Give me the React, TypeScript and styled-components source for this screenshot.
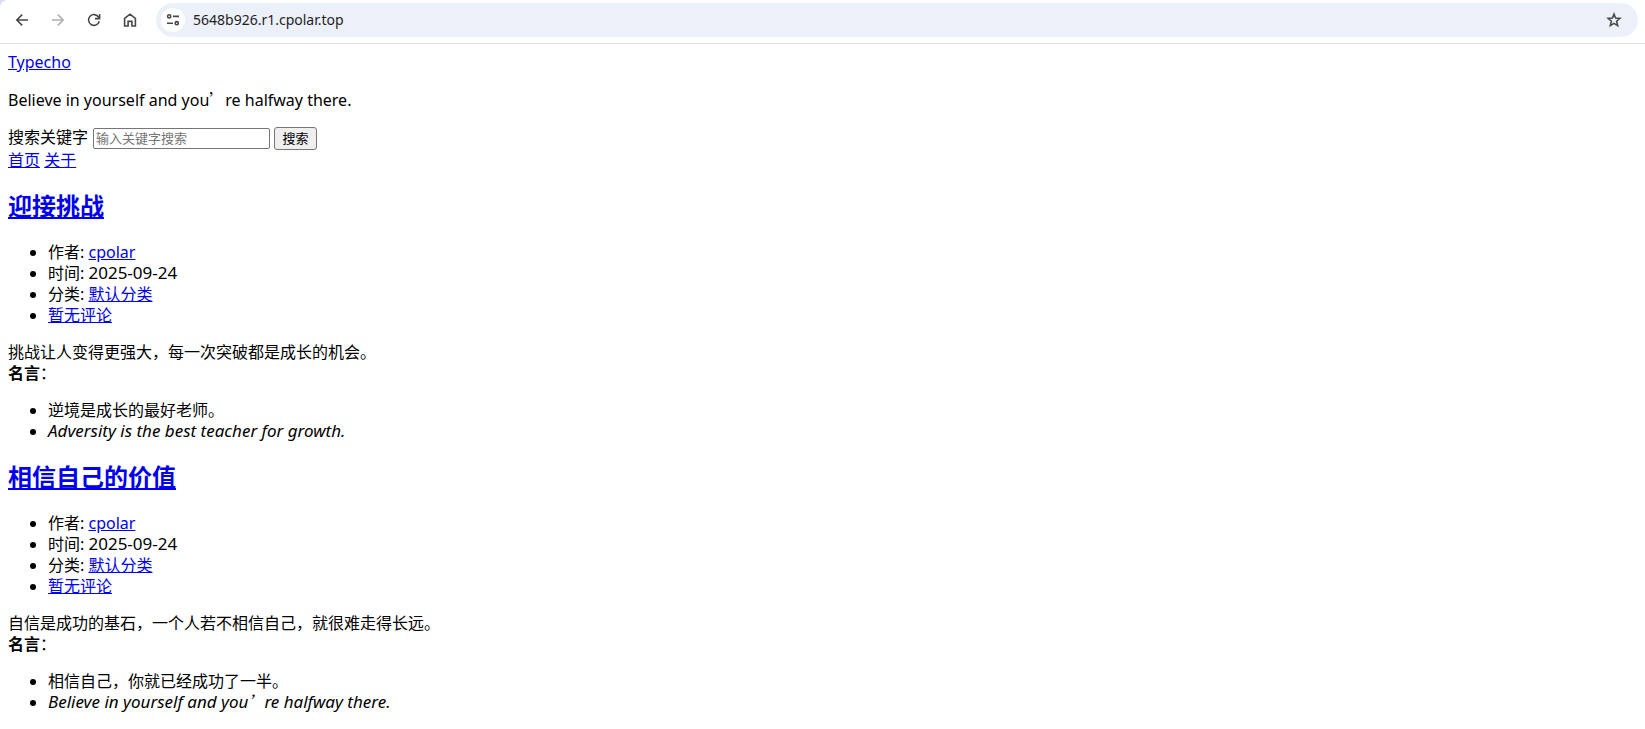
import React from "react";
import styled, { createGlobalStyle } from "styled-components";

const GlobalStyle = createGlobalStyle`
  body {
    margin: 0;
    background: #fff;
    color: #000;
    font: 16px/21px "Noto Sans", "Noto Sans CJK SC", sans-serif;
  }
`;

const Frame = styled.div`
  background: #d5dff0;
`;

const Toolbar = styled.header`
  display: flex;
  align-items: center;
  gap: 8px;
  padding: 3px 7px 6px 8px;
  border-bottom: 1px solid #dfe1e3;
  border-top-left-radius: 8px;
  background: #fff;
`;

const IconButton = styled.button`
  display: flex;
  align-items: center;
  justify-content: center;
  width: 28px;
  height: 28px;
  padding: 0;
  border: 0;
  border-radius: 50%;
  background: none;
  color: #474747;

  &:disabled {
    color: #b0b0b0;
  }
`;

const AddressBar = styled.div`
  display: flex;
  flex: 1;
  align-items: center;
  box-sizing: border-box;
  height: 34px;
  margin-left: 4px;
  padding: 0 10px 0 5px;
  border-radius: 17px;
  background: #ecf0f9;
`;

const SiteInfo = styled(IconButton)`
  width: 24px;
  height: 24px;
  background: #fff;
`;

const Address = styled.input`
  flex: 1;
  min-width: 0;
  padding: 0 8px;
  border: 0;
  outline: 0;
  background: none;
  color: #1f1f1f;
  font: 14px/20px "Noto Sans", sans-serif;
`;

const Page = styled.div`
  padding: 8px;
`;

const Link = styled.a`
  color: #0000ee;
  text-decoration: underline;
`;

const Paragraph = styled.p`
  margin: 16px 0;
`;

const SearchForm = styled.form`
  display: flex;
  align-items: center;
  height: 23px;
`;

const SearchLabel = styled.label`
  line-height: 21px;
  padding-bottom: 2px;
`;

const SearchInput = styled.input`
  box-sizing: border-box;
  width: 177px;
  height: 21px;
  margin: 0 4px 0 5px;
  padding: 0 2px 2px;
  border: 1px solid #767676;
  border-radius: 2px;
  font: 13px/17px "Noto Sans", "Noto Sans CJK SC", sans-serif;

  &::placeholder {
    color: #757575;
  }
`;

const SearchButton = styled.button`
  box-sizing: border-box;
  min-width: 43px;
  height: 23px;
  padding: 0 7px;
  border: 1px solid #767676;
  border-radius: 3px;
  background: #efefef;
  color: #000;
  font: 13px/17px "Noto Sans", "Noto Sans CJK SC", sans-serif;
`;

const Title = styled.h2`
  margin: 19px 0 21px;
  font-size: 24px;
  line-height: 31px;
`;

const List = styled.ul`
  margin: 16px 0;
  padding-left: 40px;
`;

const PostDate = styled.time`
  font-size: 17px;
  line-height: 17px;
`;

const Emphasis = styled.em`
  font-size: 17px;
  line-height: 17px;
`;

const FullWidth = styled.span`
  font-family: "Noto Sans CJK SC", sans-serif;
  font-size: 16px;
`;

const Motto = () => (
  <>
    Believe in yourself and you<FullWidth>’</FullWidth>re halfway there.
  </>
);

interface PostProps {
  title: string;
  body: string;
  saying: string;
  translation: React.ReactNode;
}

const Post = ({ title, body, saying, translation }: PostProps) => (
  <article>
    <Title>
      <Link href="#">{title}</Link>
    </Title>
    <List>
      <li>
        作者: <Link href="#">cpolar</Link>
      </li>
      <li>
        时间: <PostDate dateTime="2025-09-24">2025-09-24</PostDate>
      </li>
      <li>
        分类: <Link href="#">默认分类</Link>
      </li>
      <li>
        <Link href="#">暂无评论</Link>
      </li>
    </List>
    <Paragraph>
      {body}
      <br />
      <strong>名言</strong>：
    </Paragraph>
    <List>
      <li>{saying}</li>
      <li>
        <Emphasis>{translation}</Emphasis>
      </li>
    </List>
  </article>
);

const Icon = ({ children }: { children: React.ReactNode }) => (
  <svg width="16" height="16" viewBox="0 0 16 16" fill="none" stroke="currentColor" strokeWidth="1.6">
    {children}
  </svg>
);

export default function App() {
  return (
    <div lang="zh-CN">
      <GlobalStyle />
      <Frame>
        <Toolbar>
          <IconButton aria-label="后退">
            <Icon>
              <path d="M14 8H3M8.2 2.6 2.8 8l5.4 5.4" />
            </Icon>
          </IconButton>
          <IconButton aria-label="前进" disabled>
            <Icon>
              <path d="M2 8h11M7.8 2.6 13.2 8l-5.4 5.4" />
            </Icon>
          </IconButton>
          <IconButton aria-label="重新加载">
            <Icon>
              <path d="M13.2 9.2A5.4 5.4 0 1 1 12.6 5.2L13.4 6.3M13.6 2v4.6H9" />
            </Icon>
          </IconButton>
          <IconButton aria-label="主页">
            <Icon>
              <path d="M2.6 6.4 8 2.2l5.4 4.2V14H9.9V9.4H6.1V14H2.6z" />
            </Icon>
          </IconButton>
          <AddressBar>
            <SiteInfo aria-label="查看网站信息">
              <Icon>
                <circle cx="4.2" cy="4.4" r="1.6" />
                <path d="M8 4.4h6M2 11.2h6" />
                <circle cx="11.8" cy="11.2" r="1.6" />
              </Icon>
            </SiteInfo>
            <Address aria-label="地址" defaultValue="5648b926.r1.cpolar.top" />
            <IconButton aria-label="添加书签">
              <Icon>
                <path
                  d="M8 2 9.6 6l4.4.4-3.4 2.9 1.1 4.4L8 11.4l-3.7 2.3 1.1-4.4L2 6.4 6.4 6z"
                  strokeWidth="1.5"
                />
              </Icon>
            </IconButton>
          </AddressBar>
        </Toolbar>
      </Frame>
      <Page>
        <header>
          <Link href="#">Typecho</Link>
          <Paragraph>
            <Motto />
          </Paragraph>
          <SearchForm>
            <SearchLabel htmlFor="s">搜索关键字</SearchLabel>
            <SearchInput id="s" type="text" placeholder="输入关键字搜索" />
            <SearchButton type="submit">搜索</SearchButton>
          </SearchForm>
          <nav>
            <Link href="#">首页</Link> <Link href="#">关于</Link>
          </nav>
        </header>
        <main>
          <Post
            title="迎接挑战"
            body="挑战让人变得更强大，每一次突破都是成长的机会。"
            saying="逆境是成长的最好老师。"
            translation="Adversity is the best teacher for growth."
          />
          <Post
            title="相信自己的价值"
            body="自信是成功的基石，一个人若不相信自己，就很难走得长远。"
            saying="相信自己，你就已经成功了一半。"
            translation={<Motto />}
          />
        </main>
      </Page>
    </div>
  );
}
